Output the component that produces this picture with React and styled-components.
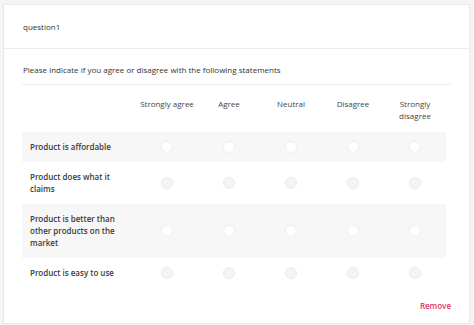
import React from 'react'
import styled, { createGlobalStyle } from 'styled-components'

const GlobalStyle = createGlobalStyle`
body {
  margin: 0;
  background: #f4f4f4;
  font-family: 'Open Sans', 'Noto Sans', sans-serif;
  color: #333;
}
`

const Card = styled.div`
margin: 4px 4px 3px 3px;
width: 465px;
background: #fff;
border: 1px solid #e9e9e9;
`

const Header = styled.div`
height: 43px;
padding: 0 19px;
display: flex;
align-items: center;
font-size: 8px;
border-bottom: 1px solid #ececec;
`

const Body = styled.div`
padding: 0 18px;
`

const Description = styled.div`
padding: 15px 0 8px 1px;
line-height: 12px;
font-size: 8px;
border-bottom: 1px solid #ededed;
`

const Grid = styled.div`
display: grid;
grid-template-columns: 114px repeat(5, 62px);
`

const HeadCell = styled.div`
padding: 13px 2px 10px;
font-size: 8px;
line-height: 12px;
text-align: center;
color: #444;
`

const Row = styled.div`
display: contents;
& > div {
  background: ${props => props.shaded ? '#f7f7f7' : '#fff'};
}
`

const Label = styled.div`
padding: 9px 12px 9px 8px;
font-size: 8px;
line-height: 12px;
font-weight: 600;
color: #3a3a3a;
`

const Cell = styled.div`
display: flex;
align-items: center;
justify-content: center;
`

const Radio = styled.span`
width: 10px;
height: 10px;
border-radius: 50%;
background: ${props => props.shaded ? '#fff' : '#f4f4f4'};
border: 1px solid ${props => props.shaded ? '#efefef' : '#ebebeb'};
`

const Footer = styled.div`
display: flex;
justify-content: flex-end;
padding: 12px 0 11px;
`

const Remove = styled.span`
font-size: 8px;
line-height: 12px;
color: #dd3a66;
font-weight: 600;
`

const columns = ['Strongly agree', 'Agree', 'Neutral', 'Disagree', 'Strongly disagree']
const statements = [
  'Product is affordable',
  'Product does what it claims',
  'Product is better than other products on the market',
  'Product is easy to use',
]

export default function App() {
  return (
    <>
      <GlobalStyle />
      <Card>
        <Header>question1</Header>
        <Body>
          <Description>Please indicate if you agree or disagree with the following statements</Description>
          <Grid>
            <HeadCell />
            {columns.map(c => <HeadCell key={c}>{c}</HeadCell>)}
            {statements.map((s, i) => (
              <Row key={s} shaded={i % 2 === 0}>
                <Label>{s}</Label>
                {columns.map(c => (
                  <Cell key={c}><Radio shaded={i % 2 === 0} /></Cell>
                ))}
              </Row>
            ))}
          </Grid>
          <Footer><Remove>Remove</Remove></Footer>
        </Body>
      </Card>
    </>
  )
}
